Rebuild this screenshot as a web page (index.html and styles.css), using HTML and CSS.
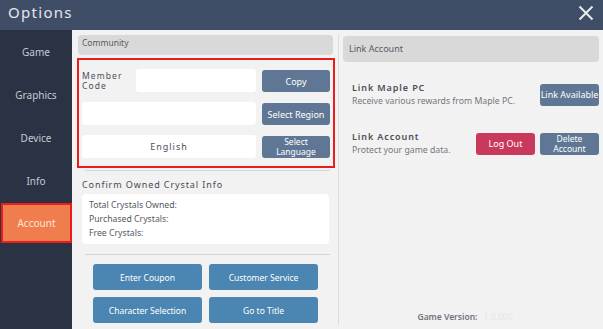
FILE: index.html
```html
<!DOCTYPE html>
<html lang="en">
<head>
    <meta charset="UTF-8">
    <meta name="viewport" content="width=device-width, initial-scale=1.0">
    <title>Options</title>
    <link rel="stylesheet" href="styles.css">
</head>
<body>
    <div class="window">
        <div class="titlebar">
            <div class="title">Options</div>
            <svg class="close" width="16" height="16" viewBox="0 0 16 16">
                <path d="M1.5 1.5 L14.5 14.5 M14.5 1.5 L1.5 14.5" stroke="#e8ebef" stroke-width="2" fill="none"/>
            </svg>
        </div>
        <div class="body">
            <div class="sidebar">
                <div class="nav-item">Game</div>
                <div class="nav-item">Graphics</div>
                <div class="nav-item">Device</div>
                <div class="nav-item">Info</div>
                <div class="nav-item active">Account</div>
            </div>
            <div class="content">
                <div class="pane left">
                    <div class="section-bar short">Community</div>
                    <div class="highlight">
                        <div class="field-row">
                            <div class="field-label">Member<br>Code</div>
                            <div class="input narrow"></div>
                            <div class="btn slate">Copy</div>
                        </div>
                        <div class="field-row">
                            <div class="input"></div>
                            <div class="btn slate">Select Region</div>
                        </div>
                        <div class="field-row">
                            <div class="input">English</div>
                            <div class="btn slate two-line">Select<br>Language</div>
                        </div>
                    </div>
                    <div class="rule"></div>
                    <div class="sub-title">Confirm Owned Crystal Info</div>
                    <div class="crystal-box">
                        <div>Total Crystals Owned:</div>
                        <div>Purchased Crystals:</div>
                        <div>Free Crystals:</div>
                    </div>
                    <div class="rule"></div>
                    <div class="action-grid">
                        <div class="btn blue">Enter Coupon</div>
                        <div class="btn blue">Customer Service</div>
                        <div class="btn blue">Character Selection</div>
                        <div class="btn blue">Go to Title</div>
                    </div>
                </div>
                <div class="divider"></div>
                <div class="pane right">
                    <div class="section-bar tall">Link Account</div>
                    <div class="link-row first">
                        <div class="link-text">
                            <div class="link-title">Link Maple PC</div>
                            <div class="link-desc">Receive various rewards from Maple PC.</div>
                        </div>
                        <div class="btn slate small">Link Available</div>
                    </div>
                    <div class="link-row second">
                        <div class="link-text">
                            <div class="link-title">Link Account</div>
                            <div class="link-desc">Protect your game data.</div>
                        </div>
                        <div class="btn red small">Log Out</div>
                        <div class="btn slate small two-line">Delete<br>Account</div>
                    </div>
                    <div class="version">Game Version: <span class="version-value">1.0.000</span></div>
                </div>
            </div>
        </div>
    </div>
</body>
</html>
```

FILE: styles.css
```css
body {
    margin: 0;
    font-family: "Noto Sans", "Open Sans", sans-serif;
    background: #f2f2f2;
}
.window {
    width: 603px;
    height: 329px;
    display: flex;
    flex-direction: column;
    overflow: hidden;
}
.titlebar {
    height: 30px;
    background: #3f4e66;
    display: flex;
    align-items: center;
    justify-content: space-between;
    padding: 0 9px 0 8px;
    box-sizing: border-box;
}
.title {
    color: #e4e7ec;
    font-size: 15px;
    letter-spacing: 1.3px;
    margin-top: -6px;
}
.close {
    margin-top: -5px;
}
.body {
    flex: 1;
    display: flex;
}
.sidebar {
    width: 72px;
    background: #2a3343;
    flex-shrink: 0;
}
.nav-item {
    height: 43px;
    display: flex;
    align-items: center;
    justify-content: center;
    color: #c5cad2;
    font-size: 10px;
}
.nav-item.active {
    height: 40px;
    margin: 1px 0 0 1px;
    background: #f07d4d;
    border: 2px solid #ea1c1c;
    box-sizing: border-box;
    color: #fbe6dc;
}
.content {
    flex: 1;
    display: flex;
    background: #f2f2f2;
    margin-left: 1px;
}
.pane.left {
    width: 265px;
    padding: 5px 5px 0 5px;
    box-sizing: border-box;
}
.divider {
    width: 1px;
    background: #dcdcdc;
    margin: 5px 0 4px 0;
}
.pane.right {
    flex: 1;
    padding: 6px 4px 7px 4px;
    display: flex;
    flex-direction: column;
}
.section-bar {
    background: #d9d9d9;
    border-radius: 4px;
    color: #555b63;
    font-size: 8.5px;
    padding-left: 4px;
    box-sizing: border-box;
}
.section-bar.short {
    height: 20px;
    line-height: 16px;
}
.section-bar.tall {
    height: 26px;
    line-height: 26px;
    padding-left: 6px;
    font-size: 9px;
}
.highlight {
    margin: 3px -2px 0 -1px;
    border: 2px solid #ea1c1c;
    padding: 9px 3px 8px 3px;
    display: flex;
    flex-direction: column;
    gap: 10px;
}
.field-row {
    display: flex;
    gap: 6px;
    height: 23px;
}
.field-label {
    width: 48px;
    font-size: 8.5px;
    line-height: 10px;
    letter-spacing: 1.1px;
    color: #4a4f57;
    padding-top: 2px;
}
.input {
    flex: 1;
    background: #ffffff;
    border-radius: 3px;
    display: flex;
    align-items: center;
    justify-content: center;
    font-size: 9px;
    letter-spacing: 1px;
    color: #4a4f57;
}
.btn {
    display: flex;
    align-items: center;
    justify-content: center;
    text-align: center;
    color: #ffffff;
    font-size: 9px;
    border-radius: 3px;
    box-sizing: border-box;
}
.btn.slate {
    background: #5f7794;
    width: 68px;
}
.highlight .btn.slate {
    margin-top: 1px;
    height: 22px;
}
.btn.two-line {
    font-size: 8.5px;
    line-height: 10px;
}
.btn.blue {
    background: #4a86b1;
    height: 26px;
    font-size: 8.5px;
}
.btn.red {
    background: #c9395b;
}
.btn.small {
    width: 59px;
    height: 22px;
    flex-shrink: 0;
}
.rule {
    height: 1px;
    background: #d6d6d6;
    margin: 2px 3px 0 7px;
}
.sub-title {
    font-size: 9px;
    letter-spacing: 0.9px;
    color: #464b53;
    margin: 8px 0 0 4px;
    line-height: 12px;
}
.crystal-box {
    background: #ffffff;
    border-radius: 4px;
    margin: 3px 4px 0 4px;
    height: 50px;
    box-sizing: border-box;
    padding: 4px 7px;
    font-size: 8.7px;
    line-height: 14px;
    color: #555a62;
}
.crystal-box + .rule {
    margin-top: 10px;
}
.action-grid {
    display: grid;
    grid-template-columns: 109px 109px;
    gap: 7px;
    margin: 9px 0 0 15px;
}
.link-row {
    display: flex;
    align-items: center;
    gap: 5px;
    padding-left: 9px;
}
.link-row.first {
    margin-top: 19px;
}
.link-row.second {
    margin-top: 22px;
}
.link-title {
    font-size: 9px;
    font-weight: 600;
    letter-spacing: 0.9px;
    color: #4a4f57;
    line-height: 14px;
}
.link-text {
    flex: 1;
}
.link-desc {
    font-size: 8.7px;
    color: #72777f;
    line-height: 13px;
}
.version {
    margin-top: auto;
    text-align: center;
    font-size: 8.5px;
    font-weight: 600;
    color: #70757d;
    padding-right: 12px;
}
.version-value {
    color: #e6e6e6;
    font-weight: 400;
    margin-left: 4px;
}
```
